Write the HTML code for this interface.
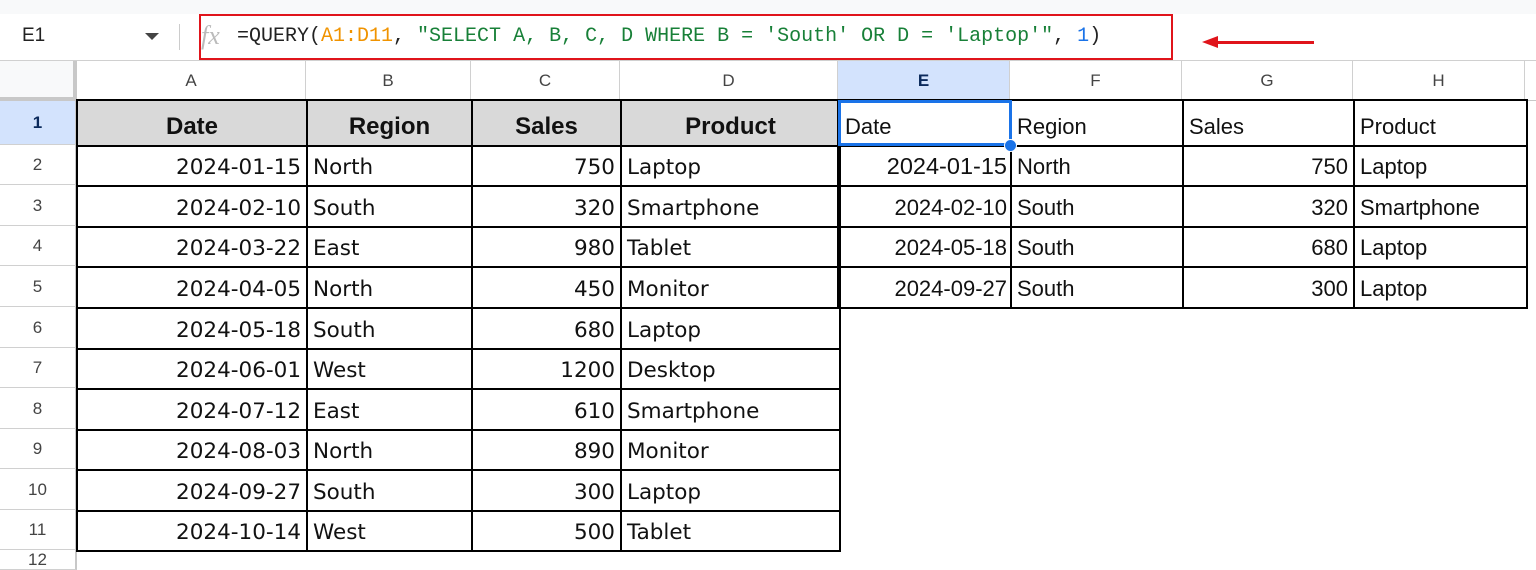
<!DOCTYPE html>
<html><head><meta charset="utf-8"><style>
*{margin:0;padding:0;box-sizing:border-box}
body{width:1536px;height:563px;overflow:hidden;background:#fff;position:relative;font-family:"Liberation Sans",Arial,sans-serif}
.abs{position:absolute}
table{border-collapse:collapse;table-layout:fixed;position:absolute}
td{border:2px solid #000;white-space:nowrap;overflow:hidden;padding:0 5px;vertical-align:bottom;padding-bottom:5px}
.t1 td{font-family:"DejaVu Sans",sans-serif;font-size:21.5px;color:#111}
.t1 tr.h td{background:#d9d9d9;font-weight:bold;text-align:center;font-family:"Liberation Sans",sans-serif;font-size:24px;padding-bottom:4px}
.t2 td{font-size:22px;color:#111}
.r{text-align:right}
.colh{position:absolute;top:61px;height:40px;border-right:1px solid #d0d0d0;border-bottom:1px solid #c8c8c8;text-align:center;line-height:40px;font-size:17px;color:#444}
.rowh{position:absolute;left:0;width:77px;border-right:2px solid #c8c8c8;border-bottom:1px solid #d0d0d0;text-align:center;font-size:17px;color:#444}
</style></head><body>
<div class="abs" style="left:0;top:0;width:1536px;height:14px;background:#f8f9fa"></div>
<div class="abs" style="left:0;top:60px;width:1536px;height:1px;background:#d0d0d0"></div>
<div class="abs" style="left:22px;top:25px;font-size:19px;color:#222">E1</div>
<div class="abs" style="left:145px;top:33px;width:0;height:0;border-left:7px solid transparent;border-right:7px solid transparent;border-top:7px solid #444"></div>
<div class="abs" style="left:179px;top:24px;width:1px;height:26px;background:#ccc"></div>
<div class="abs" style="left:199px;top:14px;width:974px;height:46px;border:2px solid #e0141b"></div>
<div class="abs" style="left:201px;top:21px;font-family:'Liberation Serif',serif;font-style:italic;font-size:26px;color:#bbb">fx</div>
<div class="abs" style="left:237px;top:25px;font-family:'Liberation Mono',monospace;font-size:20px;color:#222;white-space:pre">=QUERY(<span style="color:#f09300">A1:D11</span>, <span style="color:#188038">"SELECT A, B, C, D WHERE B = 'South' OR D = 'Laptop'"</span>, <span style="color:#1a73e8">1</span>)</div>
<div class="abs" style="left:1214px;top:41px;width:100px;height:3px;background:#e0141b"></div>
<div class="abs" style="left:1202px;top:36px;width:0;height:0;border-top:6px solid transparent;border-bottom:6px solid transparent;border-right:16px solid #e0141b"></div>

<div class="abs" style="left:0;top:61px;width:77px;height:40px;background:#f8f9fa;border-right:4px solid #c8c8c8;border-bottom:4px solid #c8c8c8"></div>
<div class="colh" style="left:77px;width:229px">A</div>
<div class="colh" style="left:306px;width:165px">B</div>
<div class="colh" style="left:471px;width:149px">C</div>
<div class="colh" style="left:620px;width:218px">D</div>
<div class="colh" style="left:838px;width:172px;background:#d3e3fd;color:#0b2a5c;font-weight:bold">E</div>
<div class="colh" style="left:1010px;width:172px">F</div>
<div class="colh" style="left:1182px;width:171px">G</div>
<div class="colh" style="left:1353px;width:172px">H</div>
<div class="colh" style="left:1525px;width:11px;border-right:none"></div>

<div class="rowh" style="top:101px;height:44px;line-height:44px;background:#d3e3fd;color:#0b2a5c;font-weight:bold">1</div>
<div class="rowh" style="top:145px;height:40px;line-height:40px">2</div>
<div class="rowh" style="top:185px;height:41px;line-height:41px">3</div>
<div class="rowh" style="top:226px;height:40px;line-height:40px">4</div>
<div class="rowh" style="top:266px;height:41px;line-height:41px">5</div>
<div class="rowh" style="top:307px;height:41px;line-height:41px">6</div>
<div class="rowh" style="top:348px;height:40px;line-height:40px">7</div>
<div class="rowh" style="top:388px;height:41px;line-height:41px">8</div>
<div class="rowh" style="top:429px;height:40px;line-height:40px">9</div>
<div class="rowh" style="top:469px;height:41px;line-height:41px">10</div>
<div class="rowh" style="top:510px;height:40px;line-height:40px">11</div>
<div class="rowh" style="top:550px;height:20px;line-height:20px">12</div>

<table class="t1" style="left:76px;top:99px;width:763px">
<colgroup><col style="width:230px"><col style="width:165px"><col style="width:149px"><col style="width:219px"></colgroup>
<tr class="h" style="height:46px"><td>Date</td><td>Region</td><td>Sales</td><td>Product</td></tr>
<tr style="height:40px"><td class="r">2024-01-15</td><td>North</td><td class="r">750</td><td>Laptop</td></tr>
<tr style="height:41px"><td class="r">2024-02-10</td><td>South</td><td class="r">320</td><td>Smartphone</td></tr>
<tr style="height:40px"><td class="r">2024-03-22</td><td>East</td><td class="r">980</td><td>Tablet</td></tr>
<tr style="height:41px"><td class="r">2024-04-05</td><td>North</td><td class="r">450</td><td>Monitor</td></tr>
<tr style="height:41px"><td class="r">2024-05-18</td><td>South</td><td class="r">680</td><td>Laptop</td></tr>
<tr style="height:40px"><td class="r">2024-06-01</td><td>West</td><td class="r">1200</td><td>Desktop</td></tr>
<tr style="height:41px"><td class="r">2024-07-12</td><td>East</td><td class="r">610</td><td>Smartphone</td></tr>
<tr style="height:40px"><td class="r">2024-08-03</td><td>North</td><td class="r">890</td><td>Monitor</td></tr>
<tr style="height:41px"><td class="r">2024-09-27</td><td>South</td><td class="r">300</td><td>Laptop</td></tr>
<tr style="height:40px"><td class="r">2024-10-14</td><td>West</td><td class="r">500</td><td>Tablet</td></tr>
</table>

<table class="t2" style="left:837px;top:99px;width:689px">
<colgroup><col style="width:173px"><col style="width:172px"><col style="width:171px"><col style="width:173px"></colgroup>
<tr style="height:46px"><td style="padding-left:6px">Date</td><td>Region</td><td>Sales</td><td>Product</td></tr>
<tr style="height:40px"><td class="r" style="font-size:23.5px;padding-right:3px">2024-01-15</td><td>North</td><td class="r">750</td><td>Laptop</td></tr>
<tr style="height:41px"><td class="r" style="padding-right:3px">2024-02-10</td><td>South</td><td class="r">320</td><td>Smartphone</td></tr>
<tr style="height:40px"><td class="r" style="padding-right:3px">2024-05-18</td><td>South</td><td class="r">680</td><td>Laptop</td></tr>
<tr style="height:41px"><td class="r" style="padding-right:3px">2024-09-27</td><td>South</td><td class="r">300</td><td>Laptop</td></tr>
</table>
<div class="abs" style="left:838px;top:100px;width:174px;height:46px;border:3px solid #1a73e8"></div>
<div class="abs" style="left:1004px;top:139px;width:13px;height:13px;border-radius:50%;background:#1a73e8;border:1px solid #fff"></div>
</body></html>
